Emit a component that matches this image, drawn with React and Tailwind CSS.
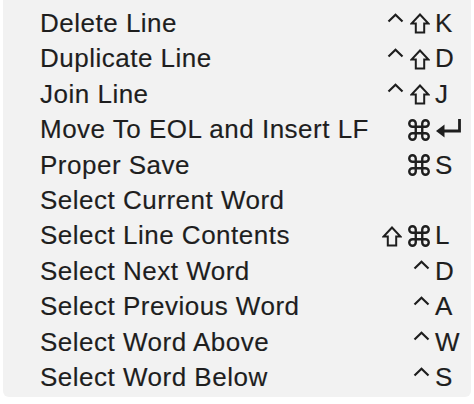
import React from "react";
import { Command } from "lucide-react";

const items = [
  { label: "Delete Line", mods: ["ctrl", "shift"], key: "K" },
  { label: "Duplicate Line", mods: ["ctrl", "shift"], key: "D" },
  { label: "Join Line", mods: ["ctrl", "shift"], key: "J" },
  { label: "Move To EOL and Insert LF", mods: ["cmd"], key: "return" },
  { label: "Proper Save", mods: ["cmd"], key: "S" },
  { label: "Select Current Word", mods: [], key: "" },
  { label: "Select Line Contents", mods: ["shift", "cmd"], key: "L" },
  { label: "Select Next Word", mods: ["ctrl"], key: "D" },
  { label: "Select Previous Word", mods: ["ctrl"], key: "A" },
  { label: "Select Word Above", mods: ["ctrl"], key: "W" },
  { label: "Select Word Below", mods: ["ctrl"], key: "S" },
];

const Caret = () => (
  <svg width="17" height="10" viewBox="0 0 17 10" className="flex-none -translate-y-[6px]">
    <path d="M1.5 8.5 L8.5 1.8 L15.5 8.5" fill="none" stroke="#1e1e1e" strokeWidth="2.2" />
  </svg>
);

const Shift = () => (
  <svg width="20" height="21" viewBox="0 0 20 21" className="flex-none">
    <path
      d="M10 1.5 L1.5 10.5 L5.8 10.5 L5.8 19.5 L14.2 19.5 L14.2 10.5 L18.5 10.5 Z"
      fill="none"
      stroke="#1e1e1e"
      strokeWidth="2"
    />
  </svg>
);

const Return = () => (
  <svg width="27" height="20" viewBox="0 0 27 20" className="flex-none -translate-y-[2px]">
    <path d="M24.5 1 V13 H7" fill="none" stroke="#1e1e1e" strokeWidth="2.8" />
    <path d="M1 13 L9.5 6.5 L9.5 19.5 Z" fill="#1e1e1e" />
  </svg>
);

const Mod = ({ type }) => {
  if (type === "ctrl") return <Caret />;
  if (type === "shift") return <Shift />;
  return <Command size={26} strokeWidth={2.2} color="#1e1e1e" className="flex-none -mx-[2px]" />;
};

export default function App() {
  return (
    <div className="bg-white w-[474px] h-[404px] pl-[3px]" style={{ fontFamily: '"Liberation Sans", Arial, sans-serif' }}>
      <div className="w-[468px] bg-[#f2f2f2] rounded-b-[6px] pt-[6px] pb-[2px] text-[#1e1e1e] text-[26px] [-webkit-text-stroke:0.15px_#1e1e1e]">
        {items.map((item, idx) => (
          <div key={idx} className="flex items-center h-[35.4px] leading-[35.4px]">
            <div className="flex-1 pl-[37px] whitespace-nowrap tracking-[0.5px]">{item.label}</div>
            <div className="w-[62px] flex justify-end items-center gap-[6px]">
              {item.mods.map((m, i) => (
                <Mod key={i} type={m} />
              ))}
            </div>
            <div className="ml-[5px] w-[36px] flex items-center">
              {item.key === "return" ? <Return /> : item.key}
            </div>
          </div>
        ))}
      </div>
    </div>
  );
}
